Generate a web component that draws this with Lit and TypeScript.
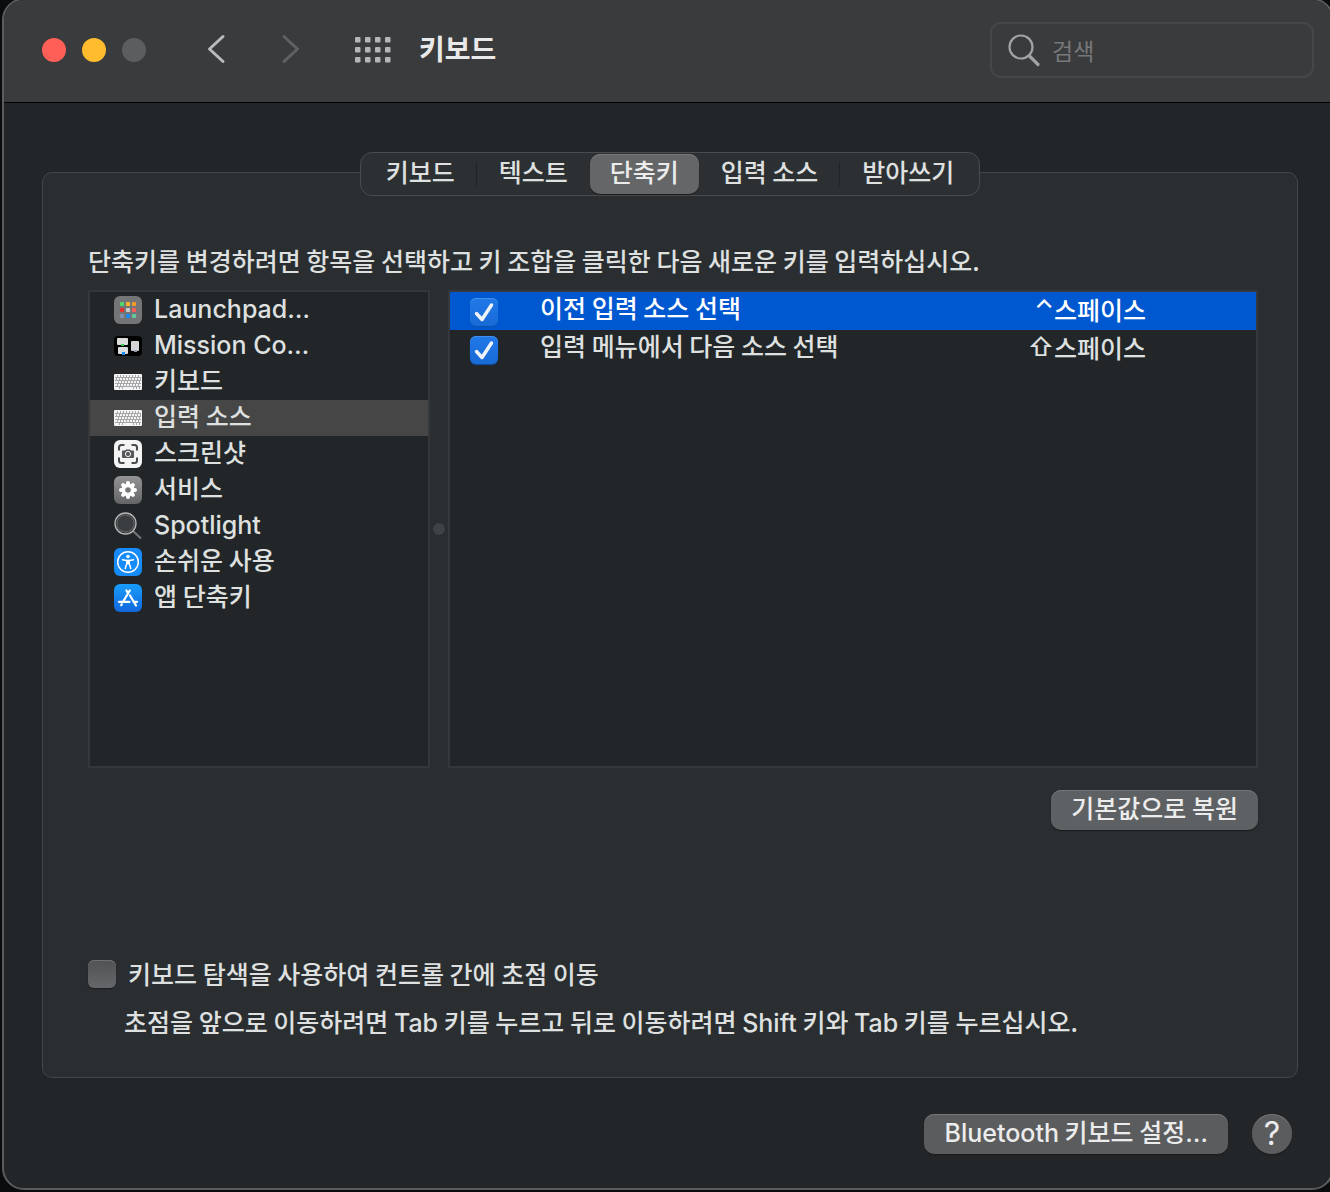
import { LitElement, html, svg, css } from "lit";
import { customElement, state } from "lit/decorators.js";
import { classMap } from "lit/directives/class-map.js";

const keyboardIcon = svg`
  <rect x="0" y="6" width="28" height="16" rx="1" fill="#f4f4f4"/>
  <g stroke="#a4a6a8" stroke-width="1" fill="none">
    <path d="M1 9.500H27M1 12.500H27M1 15.500H27M1 18.500H27"/>
    <path stroke-dasharray="1 2" stroke-width="2" d="M3 8H27M2 11H27M4 14H27M3 17H27"/>
    <path d="M5.500 19V21M8.500 19V21M19.500 19V21M22.500 19V21M25.500 19V21"/>
  </g>`;

const icons: Record<string, unknown> = {
  launchpad: svg`
    <rect width="28" height="28" rx="6" fill="#747577"/>
    <rect x="6" y="6" width="4" height="4" rx="1" fill="#53d769"/>
    <rect x="12" y="6" width="4" height="4" rx="1" fill="#fdb52b"/>
    <rect x="18" y="6" width="4" height="4" rx="1" fill="#f99a27"/>
    <rect x="6" y="12" width="4" height="4" rx="1" fill="#e5302b"/>
    <rect x="12" y="12" width="4" height="4" rx="1" fill="#c9cbcd"/>
    <rect x="18" y="12" width="4" height="4" rx="1" fill="#fc5b57"/>
    <rect x="6" y="18" width="4" height="4" rx="1" fill="#7f93ad"/>
    <rect x="12" y="18" width="4" height="4" rx="1" fill="#168bfa"/>
    <rect x="18" y="18" width="4" height="4" rx="1" fill="#5fc9a0"/>`,
  mission: svg`
    <rect y="4" width="28" height="20" rx="4" fill="#000"/>
    <rect x="3" y="6" width="11" height="7" rx="1" fill="#dcdcdc"/>
    <rect x="4" y="15" width="10" height="7" rx="1" fill="#dcdcdc"/>
    <rect x="17" y="9" width="8" height="10" rx="1" fill="#d4d4d4"/>
    <rect x="7" y="12" width="3" height="2" fill="#39c759"/>
    <rect x="8" y="20" width="3" height="3" fill="#168bfa"/>
    <rect x="20" y="18" width="3" height="2" fill="#8f9dac"/>`,
  keyboard: keyboardIcon,
  screenshot: svg`
    <rect width="28" height="28" rx="6" fill="#f4f4f4"/>
    <path d="M5 10.500V7.500Q5 5 7.500 5H10.500M17.500 5H20.500Q23 5 23 7.500V10.500M23 17.500V20.500Q23 23 20.500 23H17.500M10.500 23H7.500Q5 23 5 20.500V17.500" fill="none" stroke="#48494b" stroke-width="2"/>
    <path d="M8 11.500Q8 10.500 9 10.500H11L12 9.500H16L17 10.500H19Q20 10.500 20 11.500V17Q20 18 19 18H9Q8 18 8 17Z" fill="#55575a"/>
    <circle cx="14" cy="14" r="2.600" fill="#55575a" stroke="#f4f4f4" stroke-width="1"/>`,
  services: svg`
    <defs><linearGradient id="g-services" x2="0" y2="1"><stop stop-color="#949496"/><stop offset="1" stop-color="#646466"/></linearGradient></defs>
    <rect width="28" height="28" rx="6" fill="url(#g-services)"/>
    <g stroke="#fff" stroke-width="4" stroke-linecap="round">
      <path d="M14 7V21M7 14H21M9.100 9.100L18.900 18.900M18.900 9.100L9.100 18.900"/>
    </g>
    <circle cx="14" cy="14" r="6.500" fill="#fff"/>
    <circle cx="14" cy="14" r="2.800" fill="#78787a"/>`,
  spotlight: svg`
    <path d="M19 19L27 26.500" stroke="#75777a" stroke-width="2"/>
    <circle cx="11.500" cy="11.500" r="10.500" fill="#3a3d3f" stroke="#b4b6b8" stroke-width="1.300"/>
    <circle cx="11.500" cy="11.500" r="8.500" fill="none" stroke="#64676a" stroke-width="1"/>`,
  access: svg`
    <rect width="28" height="28" rx="6" fill="#168bfa"/>
    <circle cx="14" cy="14" r="10.300" fill="none" stroke="#fff" stroke-width="1.500"/>
    <circle cx="14" cy="8.500" r="1.800" fill="#fff"/>
    <path d="M8.500 11.800L12.500 12.500H15.500L19.500 11.800M11.200 20.500L12.800 15.500V12.500H15.200V15.500L16.800 20.500" fill="none" stroke="#fff" stroke-width="1.500" stroke-linecap="round"/>
    <rect x="12.400" y="11.800" width="3.200" height="4.700" fill="#fff"/>`,
  apps: svg`
    <defs><linearGradient id="g-apps" x2="0" y2="1"><stop stop-color="#189dfb"/><stop offset="1" stop-color="#1167dd"/></linearGradient></defs>
    <rect width="28" height="28" rx="6" fill="url(#g-apps)"/>
    <path d="M15.800 6.500L9.300 17.200M12.400 6.500L14.200 9.500M16 11.500L22 21.500M5 17.800H15.500M19.500 17.800H23M7.800 20.200L7.200 21.200" stroke="#fff" stroke-width="2.200" stroke-linecap="round" fill="none"/>`,
};

interface Category { icon: string; label: string; latin?: boolean }

const categories: Category[] = [
  { icon: "launchpad", label: "Launchpad…", latin: true },
  { icon: "mission", label: "Mission Co…", latin: true },
  { icon: "keyboard", label: "키보드" },
  { icon: "keyboard", label: "입력 소스" },
  { icon: "screenshot", label: "스크린샷" },
  { icon: "services", label: "서비스" },
  { icon: "spotlight", label: "Spotlight", latin: true },
  { icon: "access", label: "손쉬운 사용" },
  { icon: "apps", label: "앱 단축키" },
];

const tabs = ["키보드", "텍스트", "단축키", "입력 소스", "받아쓰기"];

const shortcuts = [
  { name: "이전 입력 소스 선택", mod: "⌃", key: "스페이스" },
  { name: "입력 메뉴에서 다음 소스 선택", mod: "⇧", key: "스페이스" },
];

@customElement("app-root")
export class AppRoot extends LitElement {
  @state() private tab = 2;
  @state() private category = 3;
  @state() private row = 0;

  static styles = css`
    :host {
      display: block;
      color: #dfe0e0;
      font: 500 25px/36px "Noto Sans CJK KR", Inter, sans-serif;
    }
    * { box-sizing: border-box; }
    button, input { font: inherit; color: inherit; }
    button { border: 0; padding: 0; background: none; }
    .latin { font-family: Inter, "Noto Sans CJK KR", sans-serif; }
    .screen {
      min-height: 100vh;
      display: flex;
      padding: 0 0 2px 2px;
      background: #0b0c0e;
      overflow: hidden;
    }
    .window {
      flex: 1;
      margin: -2px -4px 0 0;
      display: flex;
      flex-direction: column;
      border: 2px solid #5a5c5d;
      border-radius: 22px;
      background: #222628;
      overflow: hidden;
    }
    header {
      display: flex;
      align-items: center;
      height: 103px;
      padding: 0 18px 2px 38px;
      background: #3a3b3c;
      border-bottom: 1px solid #000;
    }
    .lights { display: flex; gap: 16px; margin-right: 52px; }
    .light { width: 24px; height: 24px; border-radius: 50%; }
    .close { background: #ff5f57; }
    .minimise { background: #febc2e; }
    .zoom { background: #5c5d5f; }
    .nav { display: flex; gap: 39px; margin-right: 46px; }
    .nav button, .all { display: flex; width: 36px; height: 36px; }
    .all { margin-right: 28px; }
    h1 { margin: 0; flex: 1; font-size: 28px; font-weight: 700; line-height: 40px; padding-bottom: 4px; color: #e9e9e9; }
    .search {
      display: flex;
      align-items: center;
      gap: 10px;
      width: 324px;
      height: 56px;
      padding: 0 16px;
      border: 2px solid #464748;
      border-radius: 11px;
    }
    .search svg { flex: none; }
    .search input { min-width: 0; flex: 1; padding: 0; border: 0; outline: 0; background: none; font-size: 23px; font-weight: 400; }
    .search input::placeholder { color: #77787a; opacity: 1; }
    main { flex: 1; display: flex; flex-direction: column; padding: 69px 34px 0 38px; }
    .panel {
      flex: 1;
      display: flex;
      flex-direction: column;
      border: 1px solid #43474a;
      border-radius: 10px;
      background: #2a2e30;
    }
    .tabs {
      align-self: center;
      display: flex;
      height: 44px;
      margin: -21px 0 46px;
      padding: 1px 3px;
      border: 1px solid #484c4e;
      border-radius: 12px;
      background: #2d3032;
    }
    .tab { padding: 0 22px 6px; border-radius: 10px; line-height: 32px; white-space: nowrap; }
    .tab.on { padding: 0 20px 6px; background: #646668; box-shadow: 0 1px 1px #1b1d1e, inset 0 1px #77797b; color: #ececec; }
    .tab.ruled {
      border-radius: 0;
      background: linear-gradient(#212426, #212426) right / 1px 24px no-repeat;
    }
    .content { flex: 1; display: flex; flex-direction: column; padding: 0 39px 36px 45px; }
    p { margin: 0; }
    .intro { margin-bottom: 12px; }
    .split { flex: 1; display: grid; grid-template-columns: 342px 18px 1fr; min-height: 320px; }
    .pane { border: 2px solid #34383a; background: #222628; }
    ul { list-style: none; margin: 0; padding: 0; }
    .cat { display: flex; align-items: center; gap: 12px; width: 100%; height: 36px; padding-left: 24px; text-align: left; }
    .cat.on { background: #464646; }
    .cat svg { flex: none; }
    .cat span { padding-bottom: 6px; }
    .cat .latin { padding-bottom: 2px; }
    .grip { align-self: center; justify-self: center; width: 12px; height: 12px; border-radius: 50%; background: #3f4245; }
    table { width: 100%; border-collapse: collapse; table-layout: fixed; }
    td { height: 38px; padding: 0; line-height: 30px; vertical-align: top; white-space: nowrap; }
    .on td { background: #0058d0; color: #fff; }
    .check-cell { width: 90px; padding: 6px 0 0 20px; }
    .keys { width: 260px; padding-right: 110px; }
    .combo { display: flex; justify-content: flex-end; align-items: center; height: 34px; }
    .mod { font: 500 25px/30px Inter, "Noto Sans CJK KR", sans-serif; }
    .check { display: grid; width: 28px; height: 28px; }
    .check input, .check svg { grid-area: 1 / 1; }
    .check svg { pointer-events: none; visibility: hidden; }
    .check input:checked + svg { visibility: visible; }
    input[type="checkbox"] {
      appearance: none;
      width: 28px;
      height: 28px;
      margin: 0;
      border-radius: 6px;
      background: linear-gradient(#505254, #65676a);
      box-shadow: 0 1px 1px #1b1d1e, inset 0 1px #6e7072;
    }
    input[type="checkbox"]:checked { background: linear-gradient(#2079e8, #186ad6); box-shadow: 0 1px 1px #0d4fa8, inset 0 1px #4090ee; }
    .push {
      height: 40px;
      padding: 0 20px 6px;
      border-radius: 10px;
      background: #5e6163;
      box-shadow: 0 1px 1px #191b1c, inset 0 1px #747678;
      color: #ececec;
      line-height: 34px;
      white-space: nowrap;
    }
    footer .push { background: #5b5c5e; }
    .restore { align-self: flex-end; margin: 22px 0 124px; }
    .option { display: flex; align-items: center; gap: 12px; height: 40px; }
    .option span { padding-bottom: 2px; }
    .hint { padding: 9px 0 0 36px; }
    footer { display: flex; justify-content: flex-end; gap: 24px; padding: 36px 6px 34px 0; }
    footer .help { width: 40px; height: 40px; padding: 0; border-radius: 50%; font-size: 32px; font-weight: 400; line-height: 40px; }
  `;

  render() {
    return html`
      <div class="screen">
        <div class="window">
          <header>
            <div class="lights">
              <button class="light close" aria-label="닫기"></button>
              <button class="light minimise" aria-label="최소화"></button>
              <button class="light zoom" aria-label="확대" disabled></button>
            </div>
            <nav class="nav">
              <button aria-label="뒤로">
                <svg width="36" height="36" fill="none" stroke="#b9babb" stroke-width="3" stroke-linecap="round" stroke-linejoin="round"><path d="M25 4.500L11.500 17L25 29.500"/></svg>
              </button>
              <button aria-label="앞으로" disabled>
                <svg width="36" height="36" fill="none" stroke="#606163" stroke-width="3" stroke-linecap="round" stroke-linejoin="round"><path d="M11 4.500L24.500 17L11 29.500"/></svg>
              </button>
            </nav>
            <button class="all" aria-label="모두 보기">
              <svg width="36" height="36" fill="#b5b6b7">
                ${[5, 15, 25].map((y) => [0, 10, 20, 30].map((x) => svg`<rect x=${x} y=${y} width="5.500" height="5.500" rx="1"/>`))}
              </svg>
            </button>
            <h1>키보드</h1>
            <label class="search">
              <svg width="34" height="34" fill="none" stroke="#a2a3a4" stroke-linecap="round">
                <circle cx="13" cy="14" r="11.500" stroke-width="2.200"/><path d="M21.500 23L30 31.500" stroke-width="3.200"/>
              </svg>
              <input type="search" placeholder="검색" aria-label="검색" />
            </label>
          </header>
          <main>
            <section class="panel">
              <div class="tabs" role="tablist">
                ${tabs.map((t, i) => html`
                  <button role="tab" aria-selected=${i === this.tab}
                    class=${classMap({ tab: true, on: i === this.tab, ruled: i !== this.tab && i + 1 !== this.tab && i < tabs.length - 1 })}
                    @click=${() => (this.tab = i)}>${t}</button>`)}
              </div>
              <div class="content">
                <p class="intro">단축키를 변경하려면 항목을 선택하고 키 조합을 클릭한 다음 새로운 키를 입력하십시오.</p>
                <div class="split">
                  <ul class="pane">
                    ${categories.map((c, i) => html`
                      <li><button class=${classMap({ cat: true, on: i === this.category })} @click=${() => (this.category = i)}>
                        <svg width="28" height="28" aria-hidden="true">${icons[c.icon]}</svg>
                        <span class=${classMap({ latin: !!c.latin })}>${c.label}</span>
                      </button></li>`)}
                  </ul>
                  <div class="grip"></div>
                  <div class="pane">
                    <table>
                      <tbody>
                        ${shortcuts.map((s, i) => html`
                          <tr class=${classMap({ on: i === this.row })} @click=${() => (this.row = i)}>
                            <td class="check-cell">
                              <span class="check">
                                <input type="checkbox" aria-label=${s.name} checked />
                                <svg width="28" height="28" fill="none" stroke="#eef3fa" stroke-width="3.500" stroke-linecap="round" stroke-linejoin="round"><path d="M6.500 15.500L12 21.500L21.500 7"/></svg>
                              </span>
                            </td>
                            <td>${s.name}</td>
                            <td class="keys"><span class="combo"><span class="mod">${s.mod}</span>${s.key}</span></td>
                          </tr>`)}
                      </tbody>
                    </table>
                  </div>
                </div>
                <button class="push restore">기본값으로 복원</button>
                <label class="option"><input type="checkbox" /><span>키보드 탐색을 사용하여 컨트롤 간에 초점 이동</span></label>
                <p class="hint">초점을 앞으로 이동하려면 <span class="latin">Tab</span> 키를 누르고 뒤로 이동하려면 <span class="latin">Shift</span> 키와 <span class="latin">Tab</span> 키를 누르십시오.</p>
              </div>
            </section>
            <footer>
              <button class="push"><span class="latin">Bluetooth</span> 키보드 설정<span class="latin">…</span></button>
              <button class="push help latin" aria-label="도움말">?</button>
            </footer>
          </main>
        </div>
      </div>
    `;
  }
}
